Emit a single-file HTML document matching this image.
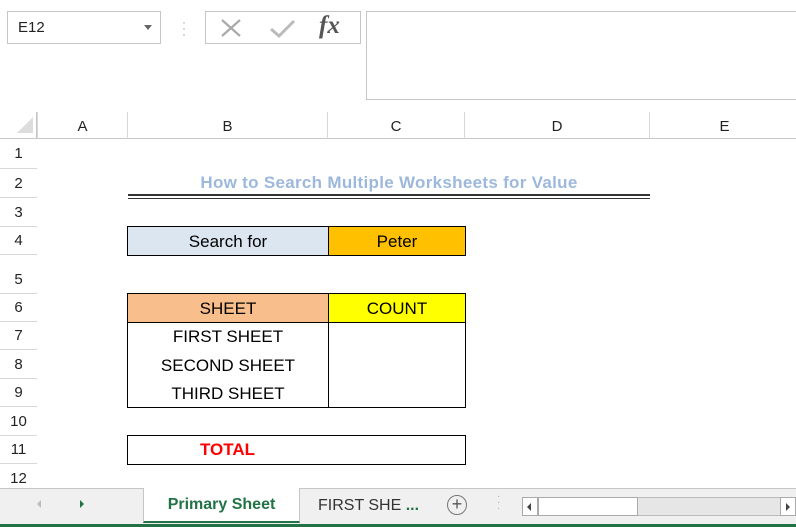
<!DOCTYPE html>
<html><head><style>
body{margin:0;width:796px;height:527px;background:#fff;position:relative;overflow:hidden;font-family:"Liberation Sans",sans-serif}
.a{position:absolute}
.rh{position:absolute;left:0;width:37px;text-align:center;font-size:15px;color:#222;border-bottom:1px solid #d8d8d8;background:#fff;box-sizing:border-box}
.ch{position:absolute;top:112px;height:27px;line-height:29px;text-align:center;font-size:15px;color:#222;border-right:1px solid #d8d8d8;box-sizing:border-box}
.c{position:absolute;box-sizing:border-box;text-align:center;font-size:17px;color:#000}
</style></head><body>
<div class="a" style="left:7px;top:11px;width:154px;height:33px;border:1px solid #c6c6c6;box-sizing:border-box;font-size:15px;line-height:31px;padding-left:10px;color:#222">E12<span style="position:absolute;right:8px;top:13px;border-left:4px solid transparent;border-right:4px solid transparent;border-top:5px solid #666"></span></div>
<div class="a" style="left:182px;top:19px;color:#999;font-size:12px;line-height:6px">·<br>·<br>·</div>
<div class="a" style="left:205px;top:11px;width:156px;height:33px;border:1px solid #c6c6c6;box-sizing:border-box">
<svg width="156" height="33" class="a" style="left:0;top:0"><path d="M16 8 L34 24 M34 8 L16 24" stroke="#aaa" stroke-width="2.2" fill="none"/><path d="M65 17 L73 24 L88 9" stroke="#bbb" stroke-width="3" fill="none"/></svg>
<span class="a" style="left:113px;top:0px;font-family:'Liberation Serif',serif;font-style:italic;font-weight:bold;font-size:25px;color:#555">fx</span></div>
<div class="a" style="left:366px;top:11px;width:440px;height:89px;border:1px solid #c6c6c6;box-sizing:border-box"></div>
<div class="a" style="left:0;top:111px;width:796px;height:28px;border-bottom:1px solid #c6c6c6;box-sizing:border-box"></div>
<svg class="a" style="left:17px;top:117px" width="16" height="16"><path d="M16 0 L16 16 L0 16Z" fill="#ddd"/></svg>
<div class="ch" style="left:37px;width:91px;border-left:1px solid #d8d8d8">A</div>
<div class="ch" style="left:128px;width:200px">B</div>
<div class="ch" style="left:328px;width:137px">C</div>
<div class="ch" style="left:465px;width:185px">D</div>
<div class="ch" style="left:650px;width:150px">E</div>
<div class="a" style="left:36px;top:112px;width:1px;height:378px;background:#c6c6c6"></div>
<div class="rh" style="top:139px;height:30px;line-height:30px">1</div>
<div class="rh" style="top:169px;height:29px;line-height:29px">2</div>
<div class="rh" style="top:198px;height:29px;line-height:29px">3</div>
<div class="rh" style="top:227px;height:28px;line-height:28px">4</div>
<div class="rh" style="top:255px;height:39px;line-height:50px">5</div>
<div class="rh" style="top:294px;height:28px;line-height:28px">6</div>
<div class="rh" style="top:322px;height:28px;line-height:28px">7</div>
<div class="rh" style="top:350px;height:29px;line-height:29px">8</div>
<div class="rh" style="top:379px;height:28px;line-height:28px">9</div>
<div class="rh" style="top:407px;height:29px;line-height:29px">10</div>
<div class="rh" style="top:436px;height:28px;line-height:28px">11</div>
<div class="rh" style="top:464px;height:26px;line-height:30px;border:none">12</div>
<div class="c" style="left:128px;top:170px;width:522px;height:28px;line-height:26px;font-weight:bold;color:#9cb8dc;font-size:17px;letter-spacing:0.3px">How to Search Multiple Worksheets for Value</div>
<div class="a" style="left:128px;top:194px;width:522px;height:5px;border-top:2px solid #333;border-bottom:1px solid #333;box-sizing:border-box"></div>
<div class="c" style="left:127px;top:226px;width:202px;height:30px;line-height:30px;background:#dce6f1;border:1px solid #000">Search for</div>
<div class="c" style="left:328px;top:226px;width:138px;height:30px;line-height:30px;background:#ffc000;border:1px solid #000">Peter</div>
<div class="c" style="left:127px;top:293px;width:202px;height:30px;line-height:30px;background:#f8bf8c;border:1px solid #000">SHEET</div>
<div class="c" style="left:328px;top:293px;width:138px;height:30px;line-height:30px;background:#ffff00;border:1px solid #000">COUNT</div>
<div class="c" style="left:127px;top:322px;width:202px;height:86px;border:1px solid #000;line-height:28.5px;padding-top:0">FIRST SHEET<br>SECOND SHEET<br>THIRD SHEET</div>
<div class="c" style="left:328px;top:322px;width:138px;height:86px;border:1px solid #000"></div>
<div class="c" style="left:127px;top:435px;width:339px;height:30px;border:1px solid #000"></div>
<div class="c" style="left:160px;top:435px;width:135px;line-height:30px;color:#f00;font-weight:bold">TOTAL</div>
<div class="a" style="left:0;top:488px;width:796px;height:39px;background:#f0f0f0;border-top:1px solid #c6c6c6;box-sizing:border-box"></div>
<div class="a" style="left:0;top:524px;width:796px;height:3px;background:#217346"></div>
<span class="a" style="left:37px;top:500px;border-top:4px solid transparent;border-bottom:4px solid transparent;border-right:4px solid #bbb"></span>
<span class="a" style="left:80px;top:500px;border-top:4px solid transparent;border-bottom:4px solid transparent;border-left:4px solid #217346"></span>
<div class="a" style="left:143px;top:488px;width:155px;height:33px;background:#fff;border-left:1px solid #c6c6c6;border-right:1px solid #c6c6c6;border-bottom:2px solid #217346;font-weight:bold;color:#217346;font-size:16px;line-height:34px;text-align:center">Primary Sheet</div>
<div class="a" style="left:318px;top:497px;font-size:16px;color:#333">FIRST SHE <b style="color:#217346">...</b></div>
<div class="a" style="left:447px;top:495px;width:20px;height:20px;border:1px solid #777;border-radius:50%;box-sizing:border-box;text-align:center;line-height:17px;font-size:18px;color:#555">+</div>
<div class="a" style="left:497px;top:494px;color:#aaa;font-size:10px;line-height:6px">·<br>·<br>·</div>
<div class="a" style="left:522px;top:497px;width:280px;height:19px;background:#e6e6e6;border:1px solid #bbb;box-sizing:border-box"></div>
<div class="a" style="left:522px;top:497px;width:16px;height:19px;background:#fff;border:1px solid #aaa;box-sizing:border-box"><span class="a" style="left:4px;top:5px;border-top:4px solid transparent;border-bottom:4px solid transparent;border-right:4px solid #444"></span></div>
<div class="a" style="left:538px;top:497px;width:100px;height:19px;background:#fff;border:1px solid #aaa;box-sizing:border-box"></div>
<div class="a" style="left:780px;top:497px;width:16px;height:19px;background:#fff;border:1px solid #aaa;box-sizing:border-box"><span class="a" style="left:5px;top:5px;border-top:4px solid transparent;border-bottom:4px solid transparent;border-left:4px solid #444"></span></div>
</body></html>
